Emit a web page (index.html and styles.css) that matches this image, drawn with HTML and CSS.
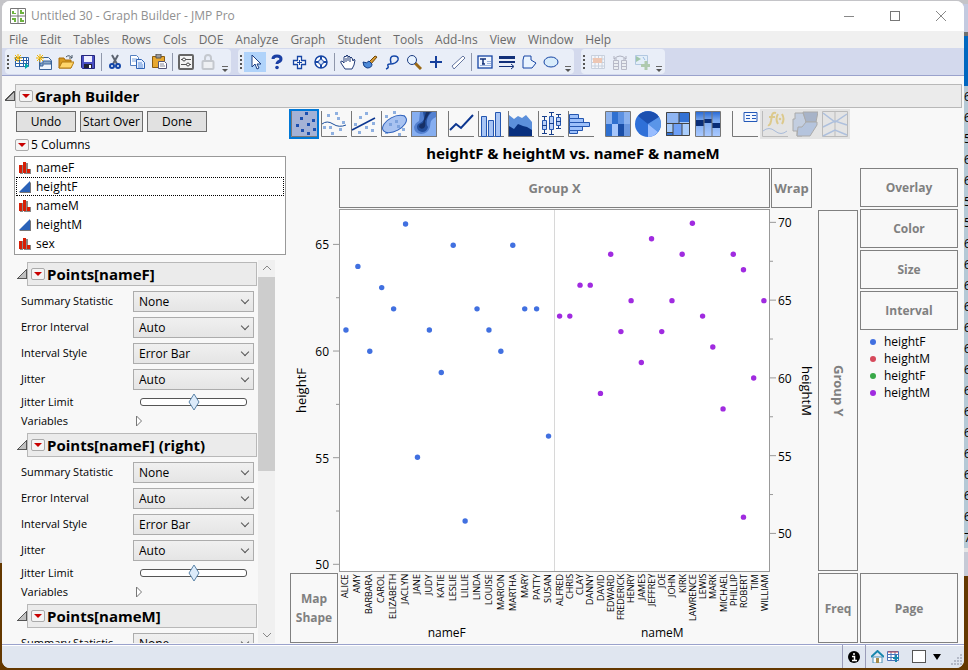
FILE: index.html
```
<!DOCTYPE html>
<html lang="en">
<head>
    <meta charset="UTF-8">
    <meta name="viewport" content="width=device-width, initial-scale=1.0">
    <title>Untitled 30 - Graph Builder - JMP Pro</title>
    <link rel="stylesheet" href="styles.css">
</head>
<body>
    <div class="behind" aria-hidden="true">
        <div class="behind-title"></div>
        <div class="behind-select"></div>
        <div class="behind-rows" id="behind-rows"></div>
        <div class="behind-foot"></div>
    </div>

    <div class="window">
        <header class="titlebar">
            <svg class="app-icon" width="16" height="16" viewBox="0 0 16 16"><path d="M.5.5h15v15H.5zM8 0v16M0 8h16" fill="#fff" stroke="#777"/><path d="M2 3h2v2h2v1H2zM10 2h2v2h2v2h-4zM2 10h4v4H4v-2H2zM10 10h2v2h2v2h-4z" fill="#6db33f"/></svg>
            <span class="title">Untitled 30 - Graph Builder - JMP Pro</span>
            <button class="win-btn" aria-label="Minimize"><svg width="12" height="12"><path d="M1 6.500h10" stroke="#888" fill="none"/></svg></button>
            <button class="win-btn" aria-label="Maximize"><svg width="12" height="12"><rect x="1.500" y="1.500" width="9" height="9" stroke="#777" fill="none"/></svg></button>
            <button class="win-btn" aria-label="Close"><svg width="12" height="12"><path d="M1 1l10 10M11 1L1 11" stroke="#888" fill="none"/></svg></button>
        </header>

        <nav class="menubar">
            <a href="#">File</a><a href="#">Edit</a><a href="#">Tables</a><a href="#">Rows</a><a href="#">Cols</a><a href="#">DOE</a><a href="#">Analyze</a><a href="#">Graph</a><a href="#">Student</a><a href="#">Tools</a><a href="#">Add-Ins</a><a href="#">View</a><a href="#">Window</a><a href="#">Help</a>
        </nav>

        <div class="toolbars">
            <div class="toolbar">
                <i class="grip"></i>
                <button aria-label="New data table"><svg width="16" height="16"><path d="M1.500 3.500h13v9h-13zM5.500 3v10M9.500 3v10M12.500 3v10M1 6.500h14M1 9.500h14" fill="#fff" stroke="#2b62a8"/><path d="M0 4h8M4 0v8M1 1l6 6M7 1L1 7" stroke="#f0b400"/><path d="M11 9l4 3-4 3z" fill="#0aa"/></svg></button>
                <button aria-label="New script"><svg width="16" height="16"><path d="M3.500 3.500h9l3 3v9h-12z" fill="#f0f5fc" stroke="#3a6398"/><path d="M4 9h3v-2h8v3H7v2H4z" fill="#8ba9c9" stroke="#3a6398"/><path d="M0 4h8M4 0v8M1 1l6 6M7 1L1 7" stroke="#f0b400"/></svg></button>
                <button aria-label="Open"><svg width="16" height="16"><path d="M1 14V4h5l1 2h6v8z" fill="#d89a20" stroke="#a86c08"/><path d="M1 14L4 8h12l-3 6z" fill="#ffd66b" stroke="#b37a10"/><path d="M8 3q3-3 6 1M14 1v3h-3" fill="none" stroke="#456"/></svg></button>
                <button aria-label="Save"><svg width="16" height="16"><path d="M1.500 1.500h13v13h-12l-1-1z" fill="#4a4fc4" stroke="#25267c"/><path d="M4 2h8v6H4z" fill="#eef"/><path d="M4 10h8v4H4z" fill="#223"/><path d="M9 11h2v3H9z" fill="#fff"/></svg></button>
                <i class="sep"></i>
                <button aria-label="Cut"><svg width="16" height="16"><path d="M5 1l5 9M11 1L6 10" stroke="#5c6470" stroke-width="2"/><circle cx="5" cy="12" r="2" fill="none" stroke="#1346a8" stroke-width="2"/><circle cx="11" cy="12" r="2" fill="none" stroke="#1346a8" stroke-width="2"/></svg></button>
                <button aria-label="Copy"><svg width="16" height="16"><path d="M1.500 1.500h6l2 2v8h-8z" fill="#fff" stroke="#5580c0"/><path d="M3 5h5M3 7h5" stroke="#7aa2dc"/><path d="M7.500 5.500h5l3 3v6h-8z" fill="#e8f1ff" stroke="#2f63b5"/><path d="M9 9h4M9 11h5M9 13h5" stroke="#5f8ed8"/></svg></button>
                <button aria-label="Paste"><svg width="16" height="16"><path d="M1.500 2.500h12v11h-12z" fill="#e8a830" stroke="#8a5c10"/><path d="M5 0h5v4H5z" fill="#999" stroke="#555"/><path d="M7.500 7.500h6l2 2v5h-8z" fill="#fff" stroke="#557"/><path d="M9 10h4M9 12h5" stroke="#889"/></svg></button>
                <i class="sep"></i>
                <button aria-label="Local data filter"><svg width="16" height="16"><rect x="1" y="1" width="14" height="14" rx="1" fill="#f4f4f4" stroke="#666" stroke-width="2"/><path d="M3 5.500h10M3 10.500h10" stroke="#555"/><circle cx="6" cy="5.500" r="1.500" fill="#fff" stroke="#444"/><circle cx="10" cy="10.500" r="1.500" fill="#fff" stroke="#444"/></svg></button>
                <button aria-label="Lock" disabled><svg width="16" height="16"><path d="M5 7V4a3 3 0 0 1 6 0v3" fill="none" stroke="#c4c8ce" stroke-width="2"/><rect x="2.500" y="7" width="11" height="8" rx="1" fill="#eef0f3" stroke="#c4c8ce" stroke-width="2"/></svg></button>
                <i class="more"></i>
            </div>
            <div class="toolbar">
                <i class="grip"></i>
                <button class="active" aria-label="Arrow"><svg width="16" height="16"><path d="M5 1v12l3-3 2 5 2-1-2-4h4z" fill="#fff" stroke="#1b3c80"/></svg></button>
                <button aria-label="Help"><svg width="16" height="16"><path d="M4 5q0-3 4-3t4 3q0 2-3 3-1 1-1 2" fill="none" stroke="#1a3fa4" stroke-width="3"/><circle cx="8" cy="13.500" r="1.800" fill="#1a3fa4"/></svg></button>
                <button aria-label="Crosshair"><svg width="16" height="16"><path d="M6.500 2.500h4v4h4v4h-4v4h-4v-4h-4v-4h4z" fill="#fff" stroke="#1645a4" stroke-width="1.300"/><path d="M8.500 6v5M6 8.500h5" stroke="#1645a4"/></svg></button>
                <button aria-label="Scroller"><svg width="16" height="16"><circle cx="8" cy="8" r="6" fill="#fff" stroke="#1645a4" stroke-width="1.500"/><circle cx="8" cy="8" r="2.500" fill="#dce8fb" stroke="#1645a4"/><path d="M8 2v3M8 11v3M2 8h3M11 8h3" stroke="#1645a4" stroke-width="2"/></svg></button>
                <i class="sep"></i>
                <button aria-label="Grabber"><svg width="16" height="16"><path d="M5 15l-4-6q-1-2 1-2l2 2V3q1-2 2 0V2q1-2 2 0v1q1-2 2 0v1q1-2 2 0l1 3q1-3 2-1l-1 5-2 4z" fill="#fff" stroke="#223c78"/><path d="M6 4v4M8 3v4M10 4v4" stroke="#223c78"/></svg></button>
                <button aria-label="Brush"><svg width="16" height="16"><path d="M7 8l6-6 2 1-6 7z" fill="#d69a35" stroke="#714706"/><path d="M1 8q4 2 6-1l3 3q0 4-5 4Q1 13 1 8z" fill="#4d8ad8" stroke="#123d86"/></svg></button>
                <button aria-label="Lasso"><svg width="16" height="16"><path d="M7 9q-2-7 3-7 5 0 4 4-2 4-8 4-3 0-2 2t-2 3" fill="none" stroke="#1346a8" stroke-width="1.500"/></svg></button>
                <button aria-label="Magnifier"><svg width="16" height="16"><path d="M9 9l6 6" stroke="#9a6814" stroke-width="3"/><circle cx="6" cy="6" r="4.500" fill="#e8f3ff" stroke="#1b3c80"/></svg></button>
                <button aria-label="Add point"><svg width="16" height="16"><path d="M8 2v12M2 8h12" stroke="#153f9c" stroke-width="2"/></svg></button>
                <button aria-label="Line"><svg width="16" height="16"><path d="M2 12L13 2l2 2L4 15z" fill="#fff" stroke="#6576a0"/></svg></button>
                <i class="sep"></i>
                <button aria-label="Annotate"><svg width="16" height="16"><rect x="1" y="2" width="14" height="12" fill="#f2f7ff" stroke="#1645a4" stroke-width="1.300"/><path d="M3 5h6M6 5v5M5 10h3" stroke="#123079" stroke-width="1.500"/><path d="M10 7.500h4M10 9.500h4M3 11.500h11" stroke="#9bb3dd"/></svg></button>
                <button aria-label="Line style"><svg width="16" height="16"><path d="M0 3.500h16" stroke="#123079" stroke-width="3"/><path d="M0 8h16" stroke="#123079" stroke-width="2"/><path d="M0 12.500h14M12 10l3 2.500-3 2.500" fill="none" stroke="#123079"/></svg></button>
                <button aria-label="Polygon"><svg width="16" height="16"><path d="M3 2h7v4l5 3-4 5H2V6z" fill="#eaf4ff" stroke="#1645a4"/></svg></button>
                <button aria-label="Oval"><svg width="16" height="16"><ellipse cx="8" cy="8" rx="7" ry="5" fill="#d8ecfb" stroke="#1645a4"/></svg></button>
                <i class="more"></i>
            </div>
            <div class="toolbar">
                <i class="grip"></i>
                <button aria-label="Data table" disabled><svg width="16" height="16" opacity=".5"><path d="M1.500 1.500h13v13h-13zM5 1v14M8.500 1v14M12 1v14M1 5h14M1 8.500h14M1 12h14" fill="#fff" stroke="#a8b4c4"/><path d="M3 4h9v5H3z" fill="#f2a070"/></svg></button>
                <button aria-label="Join tables" disabled><svg width="16" height="16" opacity=".5"><path d="M1.500 6.500h5v9h-5zM9.500 6.500h5v9h-5zM1 9.500h5M1 12.500h5M10 9.500h5M10 12.500h5" fill="#eee" stroke="#889"/><path d="M2 5q6-6 12 0M2 2v3h3M14 2v3h-3" fill="none" stroke="#778"/></svg></button>
                <button aria-label="Add graph" disabled><svg width="16" height="16" opacity=".5"><path d="M1.500 1.500h12v9h-12z" fill="#dfeefa" stroke="#7da4cb"/><path d="M2 2l5 3-5 3z" fill="#5aa060"/><path d="M9 3l2 3" stroke="#48c"/><path d="M12 7v9M7 11.500h9" stroke="#76a868" stroke-width="3"/></svg></button>
                <i class="more"></i>
            </div>
        </div>

        <main>
            <div class="outline-row">
                <i class="disclose"></i>
                <h1 class="outline"><button class="hotspot" aria-label="Graph Builder options"></button>Graph Builder</h1>
            </div>

            <div class="work">
                <section class="side">
                    <div class="actions">
                        <button>Undo</button>
                        <button class="wide">Start Over</button>
                        <button>Done</button>
                    </div>
                    <div class="columns-head"><button class="hotspot" aria-label="Column options"></button>5 Columns</div>
                    <ul class="columns">
                        <li><svg width="12" height="12"><use href="#nominal"/></svg>nameF</li>
                        <li class="focus"><svg width="12" height="12"><use href="#continuous"/></svg>heightF</li>
                        <li><svg width="12" height="12"><use href="#nominal"/></svg>nameM</li>
                        <li><svg width="12" height="12"><use href="#continuous"/></svg>heightM</li>
                        <li><svg width="12" height="12"><use href="#nominal"/></svg>sex</li>
                    </ul>
                    <div class="scroller">
                        <div class="panels" id="panels"></div>
                        <div class="scrollbar">
                            <svg width="17" height="17"><path d="M5 10l4-4 4 4" fill="none" stroke="#888"/></svg>
                            <i class="thumb"></i>
                            <svg width="17" height="17"><path d="M5 7l4 4 4-4" fill="none" stroke="#888"/></svg>
                        </div>
                    </div>
                </section>

                <section class="graph">
                    <div class="palette">
                        <div class="pal-group">
                            <button class="on" aria-label="Points"><svg width="26" height="26"><path d="M.5 0v25.500H26" fill="none" stroke="#777"/><path d="M14 1h3v3h-3zM9 6h3v3H9zM21 8h3v3h-3zM5 13h3v3H5zM16 12h3v3h-3zM10 18h3v3h-3zM22 17h3v3h-3zM16 21h3v3h-3z" fill="#1c4fb0"/></svg></button>
                            <button aria-label="Smoother"><svg width="26" height="26"><path d="M.5 0v25.500H26" fill="none" stroke="#777"/><path d="M6 3h3v3H6zM14 1h3v3h-3zM16 6h3v3h-3zM2 15h3v3H2zM8 15h3v3H8zM21 10h3v3h-3zM18 17h3v3h-3zM10 21h3v3h-3z" fill="#8fb0e0"/><path d="M1 13q5-4 11 0t13 1" fill="none" stroke="#1c4f9c"/></svg></button>
                            <button aria-label="Line of Fit"><svg width="26" height="26"><path d="M.5 0v25.500H26" fill="none" stroke="#777"/><path d="M14 1h3v3h-3zM8 5h3v3H8zM3 12h3v3H3zM21 11h3v3h-3zM14 15h3v3h-3zM7 20h3v3H7zM20 18h3v3h-3z" fill="#8fb0e0"/><path d="M1 19L24 7" stroke="#0d3790" stroke-width="1.500"/></svg></button>
                            <button aria-label="Ellipse"><svg width="26" height="26"><path d="M.5 0v25.500H26" fill="none" stroke="#777"/><path d="M4 4h3v3H4zM12 0h3v3h-3zM21 4h3v3h-3zM21 17h3v3h-3zM4 20h3v3H4zM17 22h3v3h-3z" fill="#8fb0e0"/><ellipse cx="13.500" cy="13" rx="13" ry="7" transform="rotate(-28 13.500 13)" fill="#a9c3f1" stroke="#2e60bb"/><path d="M8 12h3v3H8zM14 9h3v3h-3zM16 14h3v3h-3z" fill="#7da2dd"/></svg></button>
                            <button aria-label="Contour"><svg width="26" height="26"><rect x=".5" y=".5" width="25" height="25" fill="#86aef0" stroke="#777"/><path d="M9 1h16v5q-6 2-6 10-2 7-9 7-7-1-7-7 1-4 5-6z" fill="#5481d0"/><path d="M12 1h9q-4 3-5 8t1 7q-1 5-6 5-5-1-5-5 0-3 3-4 4-2 4-5z" fill="#244f9c"/><path d="M15 1h4l-5 9q1 5-1 7-3 2-5-1 0-3 4-4z" fill="#163066"/></svg></button>
                        </div>
                        <div class="pal-group">
                            <button aria-label="Line"><svg width="26" height="26"><path d="M.5 0v25.500H26" fill="none" stroke="#777"/><path d="M2 19l6-6 5 4L25 4" fill="none" stroke="#0d3790" stroke-width="2"/></svg></button>
                            <button aria-label="Bar"><svg width="26" height="26"><path d="M.5 0v25.500H26" fill="none" stroke="#777"/><path d="M3.500 5.500h5v20h-5zM10.500 9.500h5v16h-5zM17.500 1.500h5v24h-5z" fill="#a8c5f5" stroke="#2456b0"/></svg></button>
                            <button aria-label="Area"><svg width="26" height="26"><path d="M.5 0v25.500H26" fill="none" stroke="#777"/><path d="M1 4l5 4 4-3 4 2 4-3 6 7v14H1z" fill="#5b8fdb"/><path d="M1 15l5 3 4-5 5 2 4 1 5 3v6H1z" fill="#08307f"/></svg></button>
                            <button aria-label="Box Plot"><svg width="26" height="26"><path d="M.5 0v25.500H26" fill="none" stroke="#777"/><path d="M6.500 5v17M4 5.500h5M4 22.500h5M13.500 1v22M11 1.500h5M11 23.500h5M20.500 3v14M18 3.500h5M18 17.500h5" stroke="#173f8b"/><path d="M4.500 9.500h4v9h-4zM11.500 5.500h4v13h-4zM18.500 6.500h4v8h-4z" fill="#b9d0f8" stroke="#2456b0"/><path d="M4 14.500h5M11 12.500h5M18 10.500h5" stroke="#173f8b"/></svg></button>
                            <button aria-label="Histogram"><svg width="26" height="26"><path d="M1.500 3.500h9v4h-9zM1.500 7.500h14v4h-14zM1.500 11.500h20v4h-20zM1.500 15.500h13v4h-13zM1.500 19.500h8v3h-8z" fill="#9ec1fa" stroke="#2456b0"/><path d="M.5 0v25.500H26" fill="none" stroke="#777"/></svg></button>
                        </div>
                        <div class="pal-group">
                            <button aria-label="Heatmap"><svg width="26" height="26"><path d="M1 1h6v12H1zM19 1h6v12h-6z" fill="#8cb2ee"/><path d="M7 1h6v12H7zM1 13h6v12H1z" fill="#2f70d0"/><path d="M13 1h6v12h-6z" fill="#5c91e2"/><path d="M7 13h6v12H7z" fill="#a7c7fc"/><path d="M13 13h6v12h-6z" fill="#1b4fa8"/><path d="M19 13h6v12h-6z" fill="#6c98e0"/><path d="M.5.5h25v25H.5z" fill="none" stroke="#777"/></svg></button>
                            <button aria-label="Pie"><svg width="26" height="26"><circle cx="13" cy="13" r="13" fill="#2f70d8"/><path d="M13 13L3 5A13 13 0 0 1 24 6z" fill="#1c50b0"/><path d="M13 13L24 6a13 13 0 0 1-1 15z" fill="#5a95e8"/><path d="M13 13l10 8a13 13 0 0 1-10 5z" fill="#98bdff"/></svg></button>
                            <button aria-label="Treemap"><svg width="26" height="26"><path d="M1 1h23v24H1z" fill="#a9cdfc"/><path d="M1 1h13v11H1z" fill="#8fb5f2"/><path d="M14 1h10v10H14z" fill="#3372d4"/><path d="M8 12h9v13H8z" fill="#6ea0f7"/><path d="M1 21h7v4H1z" fill="#3372d4"/><path d="M1.500 1.500h23v23h-23zM14 1v11M1 12.500h24M8 12v13M17 12v13M1 21.500h7" fill="none" stroke="#444"/></svg></button>
                            <button aria-label="Mosaic"><svg width="26" height="26"><defs><linearGradient id="fade" x2="0" y2="1"><stop stop-color="#2a6ad4"/><stop offset=".35" stop-color="#7aa8ee"/><stop offset="1" stop-color="#a9c9ff"/></linearGradient></defs><path d="M1 1h24v24H1z" fill="url(#fade)"/><path d="M1 9h8v6H1zM9 8h8v4H9zM17 12h8v5h-8z" fill="#092d77"/><path d="M.5.5h25v25H.5zM9 1v24M17 1v24" fill="none" stroke="#777"/></svg></button>
                        </div>
                        <div class="pal-group">
                            <button aria-label="Caption Box"><svg width="26" height="26"><path d="M.5 0v25.500H26" fill="none" stroke="#777"/><path d="M12 1.500h13v9H12z" fill="#f4f8ff" stroke="#2459b8"/><path d="M14 4.500h4M20 4.500h4M14 7.500h4M20 7.500h4" stroke="#2459b8"/></svg></button>
                            <button disabled aria-label="Formula"><svg width="26" height="26"><path d="M.5 0v25.500H26" fill="none" stroke="#bbb"/><path d="M6 14q2 1 3-4l1-6q1-3 4-2M7 6h6M16 3q-3 5 0 10M20 3q3 5 0 10" fill="none" stroke="#dcc98c" stroke-width="2"/><circle cx="18" cy="8" r="1.300" fill="#dcc98c"/><path d="M1 20q6-5 12 0t12 0" fill="none" stroke="#a9bbd8"/></svg></button>
                            <button disabled aria-label="Map Shapes"><svg width="26" height="26"><path d="M1 8h2V2h8l3 8v4l-5 4 1 7H5v-5H1z" fill="#c3cee0" stroke="#aaa"/><path d="M11 1h15l-2 10H14z" fill="#a7b3c8" stroke="#aaa"/><path d="M14 11h11v3l-7 11H5l1-9h4z" fill="#b5c4dd" stroke="#aaa"/></svg></button>
                            <button disabled aria-label="Parallel"><svg width="26" height="26"><path d="M.5.500h25v25H.5zM13 1v24" fill="none" stroke="#bbb"/><path d="M1 2l12 9 12-8M1 16l12-6 12 4M1 25l12-6 12 5" fill="none" stroke="#aec0dd" stroke-width="1.500"/></svg></button>
                        </div>
                    </div>

                    <h2 class="graph-title">heightF &amp; heightM vs. nameF &amp; nameM</h2>

                    <div class="zones">
                        <div class="zone group-x">Group X</div>
                        <div class="zone wrap">Wrap</div>

                        <div class="axis axis-left">
                            <span class="axis-title up">heightF</span>
                            <svg class="ticks" id="ticks-left"></svg>
                        </div>
                        <svg class="plot" id="plot"></svg>
                        <div class="axis axis-right">
                            <svg class="ticks" id="ticks-right"></svg>
                            <span class="axis-title">heightM</span>
                        </div>
                        <div class="zone group-y"><span>Group Y</span></div>

                        <div class="right-zones">
                            <div class="zone">Overlay</div>
                            <div class="zone">Color</div>
                            <div class="zone">Size</div>
                            <div class="zone">Interval</div>
                            <ul class="legend">
                                <li class="blue">heightF</li>
                                <li class="red">heightM</li>
                                <li class="green">heightF</li>
                                <li class="purple">heightM</li>
                            </ul>
                        </div>

                        <div class="zone map">Map Shape</div>
                        <div class="axis-x">
                            <div class="names-block"><div class="names" id="names-f"></div><span>nameF</span></div>
                            <div class="names-block"><div class="names" id="names-m"></div><span>nameM</span></div>
                        </div>
                        <div class="zone freq">Freq</div>
                        <div class="zone page">Page</div>
                    </div>
                </section>
            </div>
        </main>

        <footer class="statusbar">
            <button class="cell" aria-label="Information"><svg width="12" height="12"><circle cx="6" cy="6" r="6" fill="#000"/><path d="M6 2v2M4 5.500h2.500V10M4 9.500h5" stroke="#fff" stroke-width="1.500" fill="none"/></svg></button>
            <div class="cell tray">
                <svg width="13" height="13"><path d="M2 7h9v6H2z" fill="#fff" stroke="#4a8fb5"/><path d="M0 7l6.500-6L13 7" fill="none" stroke="#1887ad" stroke-width="2"/><path d="M5 8h3v5H5z" fill="#a68a48"/></svg>
                <svg width="13" height="13"><path d="M.5 1.500h11v9H.5zM4 1v9M8 1v9M0 4.500h12M0 7.500h12" fill="#fff" stroke="#4a72b8"/><path d="M1 2h10" stroke="#c44"/><path d="M6 8h6M9 5v7" stroke="#1887ad" stroke-width="2"/></svg>
                <input type="checkbox" aria-label="Select window">
                <button aria-label="Arrange"><svg width="8" height="6"><path d="M0 0h8L4 6z"/></svg></button>
            </div>
            <svg class="resize" width="12" height="12"><path d="M9 0h2v2H9zM6 3h2v2H6zM9 3h2v2H9zM3 6h2v2H3zM6 6h2v2H6zM9 6h2v2H9zM0 9h2v2H0zM3 9h2v2H3zM6 9h2v2H6zM9 9h2v2H9z" fill="#b4bac8"/></svg>
        </footer>
    </div>

    <svg width="0" height="0" class="defs">
        <defs>
            <g id="nominal"><path d="M1 3h3v9H1zM5 1h4v11H5zM9 7h3v5H9z" fill="#888"/><path d="M0 3h3v8H0zM4 0h3v11H4zM8 7h3v4H8z" fill="#d81e05"/></g>
            <g id="continuous"><path d="M0 12L12 1v11z" fill="#777"/><path d="M0 11L11 0v11z" fill="#2a62b8"/></g>
        </defs>
    </svg>
    <script src="script.js"></script>
</body>
</html>
```
FILE: styles.css
```
:root {
    --face: #f8f8f8;
    --outline: #ebebeb;
    --line: #b8b8b8;
    --zone: #808080;
    --bar: #d3d9ed;
    --rule: #9aa2cc;
}
* { box-sizing: border-box; }
html, body {
    height: 100%;
    margin: 0;
}
body {
    padding: 1px 4px 2px 2px;
    font-family: "Open Sans", "Noto Sans", sans-serif;
    font-size: 12px;
    line-height: 16px;
    color: #000;
    background: linear-gradient(#c4c4c8 84%, #643800 84%);
    overflow: hidden;
}
button, select, input {
    font: inherit;
    color: inherit;
    margin: 0;
}
button {
    padding: 0;
    border: 0;
    background: none;
}
ul {
    list-style: none;
    margin: 0;
    padding: 0;
}
svg { display: block; flex: none; }
.defs { position: absolute; }

/* the data table that peeks out behind the window */
.behind {
    position: absolute;
    top: 4px;
    right: 0;
    width: 12px;
    z-index: 0;
}
.behind-title {
    height: 32px;
    background: #c3cae0;
    border-bottom: 4px solid #707070;
}
.behind-select {
    height: 50px;
    background: #0067c0;
}
.behind-rows {
    background: #b5c9d6;
    line-height: 21px;
    text-indent: 8px;
    overflow: hidden;
}
.behind-foot {
    height: 28px;
    background: #c6cad6;
    border-top: 4px solid #e6e6e6;
}

.window {
    position: relative;
    z-index: 1;
    height: 100%;
    display: flex;
    flex-direction: column;
    background: var(--face);
    border-radius: 8px;
    overflow: hidden;
}
.titlebar {
    flex: none;
    display: flex;
    align-items: center;
    height: 30px;
    padding-left: 8px;
    background: #fff;
    color: #909090;
}
.titlebar .title {
    flex: 1;
    margin-left: 5px;
}
.win-btn {
    display: grid;
    place-items: center;
    width: 46px;
    height: 30px;
}
.menubar {
    flex: none;
    display: flex;
    gap: 12px;
    height: 17px;
    padding-left: 7px;
    background: #f0f0f0;
    line-height: 18px;
}
.menubar a {
    color: #6a6a6a;
    text-decoration: none;
}

.toolbars {
    flex: none;
    display: flex;
    gap: 7px;
    height: 28px;
    padding: 1px 3px;
    background: var(--bar);
    border-bottom: 1px solid var(--rule);
}
.toolbar {
    display: flex;
    align-items: center;
    height: 25px;
    border-radius: 4px;
    background: #e9eef8;
}
.toolbar button {
    display: grid;
    place-items: center;
    width: 22px;
    height: 20px;
}
.toolbar .active {
    background: #b0d3fa;
}
.grip {
    width: 2px;
    height: 14px;
    margin: 0 2px;
    background: repeating-linear-gradient(#555 0 2px, transparent 2px 4px);
}
.sep {
    width: 1px;
    height: 18px;
    margin: 0 2px;
    background: #8f97ab;
}
.more {
    position: relative;
    align-self: flex-end;
    width: 12px;
    height: 8px;
    background: linear-gradient(#666, #666) 3px 0 / 6px 1px no-repeat;
}
.more::after {
    content: "";
    position: absolute;
    left: 3px;
    top: 3px;
    border: 3px solid transparent;
    border-top-color: #555;
}

main {
    flex: 1;
    min-height: 0;
    display: flex;
    flex-direction: column;
    padding: 8px 2px 1px 3px;
}
.outline-row {
    flex: none;
    display: flex;
    align-items: center;
}
.disclose {
    width: 10px;
    height: 10px;
    background: linear-gradient(135deg, transparent 50%, #555 50%, #555 58%, #c0c0c0 58%);
    border-right: 1px solid #555;
    border-bottom: 1px solid #555;
}
.outline {
    flex: 1;
    display: flex;
    align-items: center;
    gap: 2px;
    height: 24px;
    margin: 0;
    padding-left: 3px;
    border: 1px solid var(--line);
    background: var(--outline);
    font-size: 15px;
    line-height: 20px;
    font-weight: 700;
}
.hotspot {
    flex: none;
    display: grid;
    place-items: center;
    width: 14px;
    height: 12px;
    border: 1px solid #aaa;
    border-radius: 2px;
    background: #f4f4f4;
}
.hotspot::after {
    content: "";
    border: 4px solid transparent;
    border-top-color: #c80000;
    border-bottom: 0;
}

.work {
    flex: 1;
    min-height: 0;
    display: grid;
    grid-template-columns: 272px 1fr;
    gap: 2px;
    padding-left: 9px;
}
.side {
    display: flex;
    flex-direction: column;
    min-height: 0;
    padding-top: 3px;
}
.actions {
    flex: none;
    display: flex;
    gap: 4px;
    padding-left: 2px;
}
.actions button {
    width: 60px;
    height: 21px;
    border: 1px solid #6c6c6c;
    background: #e1e1e1;
}
.actions .wide { width: 63px; }
.columns-head {
    flex: none;
    display: flex;
    align-items: center;
    gap: 2px;
    height: 24px;
    padding: 2px 0 0 1px;
}
.columns {
    flex: none;
    padding: 1px;
    border: 1px solid #999;
    background: #fff;
}
.columns li {
    display: flex;
    align-items: center;
    gap: 5px;
    height: 19px;
    padding-left: 2px;
    border: 1px solid transparent;
}
.columns .focus { border: 1px dotted #000; }

.scroller {
    flex: 1;
    min-height: 0;
    display: flex;
    padding-right: 11px;
    margin-top: 5px;
}
.panels {
    flex: 1;
    overflow: hidden;
    padding: 2px 1px 0 3px;
}
.panel { height: 171px; }
.panel .outline-row { padding-bottom: 2px; }
.panel .outline { line-height: 18px; }
.field {
    display: flex;
    align-items: center;
    height: 26px;
    padding: 0 3px 0 4px;
}
.field.short { height: 19px; }
.field label, .field .name {
    width: 112px;
    font-size: 11px;
}
.select {
    flex: 1;
    position: relative;
}
.select select {
    display: block;
    width: 100%;
    height: 21px;
    padding: 1px 5px 0;
    border: 1px solid #acacac;
    border-radius: 0;
    background: linear-gradient(#f0f0f0, #e5e5e5);
    appearance: none;
    font-size: 12px;
}
.select::after {
    content: "";
    position: absolute;
    right: 6px;
    top: 6px;
    width: 5px;
    height: 5px;
    border: solid #555;
    border-width: 0 1px 1px 0;
    transform: rotate(45deg);
    pointer-events: none;
}
.field input[type=range] {
    width: 107px;
    height: 18px;
    margin-left: 7px;
    appearance: none;
    background: none;
}
.field input::-webkit-slider-runnable-track {
    height: 8px;
    border: 1px solid #555;
    border-radius: 3px;
    background: #fff;
}
.field input::-webkit-slider-thumb {
    appearance: none;
    width: 12px;
    height: 18px;
    margin-top: -6px;
    background: url("data:image/svg+xml,%3Csvg xmlns='http://www.w3.org/2000/svg' width='12' height='18'%3E%3Cpath d='M6 1l5 8-5 8-5-8z' fill='%23dcebfa' stroke='%235b84a8'/%3E%3C/svg%3E");
}
.scrollbar {
    width: 17px;
    display: flex;
    flex-direction: column;
    background: #f0f0f0;
}
.scrollbar .thumb {
    height: 194px;
    margin-bottom: auto;
    background: #cdcdcd;
}

.graph {
    display: flex;
    flex-direction: column;
    min-width: 0;
    padding-right: 4px;
}
.palette {
    flex: none;
    display: flex;
    gap: 7px;
    height: 30px;
    padding-left: 1px;
    margin-top: 1px;
}
.pal-group { display: flex; }
.pal-group button {
    display: grid;
    place-items: center;
    width: 30px;
    height: 30px;
}
.pal-group .on {
    background: #a4b2d6;
    border: 2px solid #0078d7;
}
.pal-group button:disabled { background: #e4e4e4; }
.graph-title {
    flex: none;
    margin: 0;
    height: 29px;
    padding-right: 100px;
    font-family: "Noto Sans", "Open Sans", sans-serif;
    font-size: 15px;
    line-height: 29px;
    text-align: center;
}
.zones {
    flex: 1;
    min-height: 0;
    display: grid;
    grid-template-columns: 48px 1fr 46px 41px 98px;
    grid-template-rows: 40px 1fr 70px;
    gap: 1px;
    padding-left: 2px;
}
.zone {
    display: grid;
    place-items: center;
    border: 1px solid var(--zone);
    color: var(--zone);
    font-weight: 700;
    text-align: center;
    line-height: 19px;
}
.group-x, .group-y, .wrap { font-size: 13px; }
.group-x { grid-column: 2; }
.wrap {
    grid-column: 3;
    margin-right: 5px;
}
.axis {
    grid-row: 2;
    display: flex;
    align-items: center;
    justify-content: space-between;
}
.axis-title {
    writing-mode: vertical-rl;
    font-size: 13px;
}
.axis-title.up { transform: rotate(180deg); }
.axis-left { padding-left: 3px; }
.axis-right { padding-right: 2px; }
.ticks {
    width: 27px;
    height: 100%;
    overflow: visible;
}
.ticks line, .plot line { stroke: #999; }
.plot {
    grid-row: 2;
    width: 100%;
    height: 100%;
    background: #fff;
    border: 1px solid #999;
}
.plot .divider { stroke: #d8d8d8; }
.group-y {
    grid-column: 4;
    grid-row: 2;
    margin: 1px 1px 1px 0;
}
.group-y span { writing-mode: vertical-rl; }
.right-zones {
    grid-column: 5;
    grid-row: 1 / 3;
    display: flex;
    flex-direction: column;
    gap: 2px;
}
.right-zones .zone { height: 39px; }
.legend { padding: 1px 0 0 10px; }
.legend li {
    display: flex;
    align-items: center;
    gap: 8px;
    height: 17px;
}
.legend li::before {
    content: "";
    width: 6px;
    height: 6px;
    border-radius: 50%;
    background: currentColor;
}
.blue::before { color: #4170e0; }
.red::before { color: #d6495b; }
.green::before { color: #38a848; }
.purple::before { color: #a02be0; }
.map, .axis-x, .freq, .page { grid-row: 3; }
.freq {
    grid-column: 4;
    margin-right: 1px;
}
.page { grid-column: 5; }
.axis-x {
    display: flex;
    min-width: 0;
}
.names-block {
    flex: 1 1 0;
    min-width: 0;
    display: flex;
    flex-direction: column;
    align-items: center;
}
.names {
    display: flex;
    width: 100%;
    height: 52px;
    padding-top: 1px;
}
.names span {
    flex: 1 1 0;
    width: 0;
    display: flex;
    flex-direction: column;
    justify-content: center;
    align-items: flex-end;
    writing-mode: vertical-rl;
    transform: rotate(180deg);
    font-size: 9px;
    line-height: 10px;
}

.statusbar {
    flex: none;
    display: flex;
    justify-content: flex-end;
    height: 24px;
    border-top: 1px solid var(--rule);
    box-shadow: inset 0 1px #fff;
    background: #e0e6f0;
}
.cell {
    display: flex;
    align-items: center;
    padding: 0 5px;
    border-left: 1px solid #9a9cb8;
}
.tray { gap: 3px; }
.tray input {
    appearance: none;
    width: 14px;
    height: 13px;
    margin: 0 4px 0 9px;
    border: 1px solid #555;
    background: #fff;
}
.resize {
    align-self: flex-end;
    margin: 0 1px 2px 5px;
}
```
FILE: script.js
```
const girls = [
    ['ALICE', 61], ['AMY', 64], ['BARBARA', 60], ['CAROL', 63], ['ELIZABETH', 62], ['JACLYN', 66],
    ['JANE', 55], ['JUDY', 61], ['KATIE', 59], ['LESLIE', 65], ['LILLIE', 52], ['LINDA', 62],
    ['LOUISE', 61], ['MARION', 60], ['MARTHA', 65], ['MARY', 62], ['PATTY', 62], ['SUSAN', 56]
];
const boys = [
    ['ALFRED', 64], ['CHRIS', 64], ['CLAY', 66], ['DANNY', 66], ['DAVID', 59], ['EDWARD', 68],
    ['FREDERICK', 63], ['HENRY', 65], ['JAMES', 61], ['JEFFREY', 69], ['JOE', 63], ['JOHN', 65],
    ['KIRK', 68], ['LAWRENCE', 70], ['LEWIS', 64], ['MARK', 62], ['MICHAEL', 58], ['PHILLIP', 68],
    ['ROBERT', 67, 51], ['TIM', 60], ['WILLIAM', 65]
];
// visible axis ranges
const left = { min: 49.64, max: 66.66 };
const right = { min: 47.52, max: 70.86 };
const pct = (v, axis) => (100 * (axis.max - v) / (axis.max - axis.min)).toFixed(2) + '%';

function points(data, axis, start, color) {
    return data.map(([, ...values], i) => values.map(v =>
        `<circle cx="${(start + (i + 0.5) / data.length * 50).toFixed(2)}%" cy="${pct(v, axis)}" r="2.700" fill="${color}"/>`
    ).join('')).join('');
}
document.getElementById('plot').innerHTML =
    '<line class="divider" x1="50%" x2="50%" y1="0" y2="100%"/>' +
    points(girls, left, 0, '#4170e0') + points(boys, right, 50, '#a02be0');

function ticks(axis, isLeft) {
    let out = '';
    for (let v = 50; v <= axis.max; v += 2.5) {
        const y = pct(v, axis);
        const major = v % 5 === 0;
        const len = major ? 6 : 3;
        const x = isLeft ? [28 - len, 28] : [-1, len - 1];
        out += `<line x1="${x[0]}" x2="${x[1]}" y1="${y}" y2="${y}"/>`;
        if (major) {
            out += `<text x="${isLeft ? 18 : 7}" y="${y}" dy="5" text-anchor="${isLeft ? 'end' : 'start'}">${v}</text>`;
        }
    }
    return out;
}
document.getElementById('ticks-left').innerHTML = ticks(left, true);
document.getElementById('ticks-right').innerHTML = ticks(right, false);

const names = data => data.map(d => `<span>${d[0]}</span>`).join('');
document.getElementById('names-f').innerHTML = names(girls);
document.getElementById('names-m').innerHTML = names(boys);

// one settings panel for each point element
const fields = [
    ['Summary Statistic', 'None'], ['Error Interval', 'Auto'],
    ['Interval Style', 'Error Bar'], ['Jitter', 'Auto']
];
document.getElementById('panels').innerHTML = ['Points[nameF]', 'Points[nameF] (right)', 'Points[nameM]'].map((title, n) => `
    <div class="panel">
        <div class="outline-row"><i class="disclose"></i><h3 class="outline"><button class="hotspot" aria-label="Options"></button>${title}</h3></div>
        ${fields.map(([label, value], i) => `
        <div class="field"><label for="f${n}${i}">${label}</label><span class="select"><select id="f${n}${i}"><option>${value}</option></select></span></div>`).join('')}
        <div class="field short"><label for="limit${n}">Jitter Limit</label><input type="range" id="limit${n}" min="0" max="1" step="0.1" value="0.5"></div>
        <div class="field short"><span class="name">Variables</span><button aria-label="Show variables"><svg width="12" height="12"><path d="M3.500 1v10l5-5z" fill="#fff" stroke="#777"/></svg></button></div>
    </div>`).join('');

document.getElementById('behind-rows').innerHTML =
    [...'6656655666666666666667'].map(d => `<div>${d}</div>`).join('');
```
